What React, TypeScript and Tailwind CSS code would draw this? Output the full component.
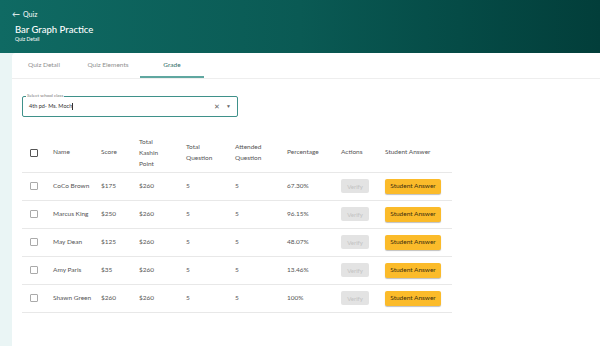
import { useState } from 'react';

interface Row {
  name: string;
  score: string;
  total: string;
  questions: number;
  attended: number;
  percentage: string;
}

const rows: Row[] = [
  { name: 'CoCo Brown', score: '$175', total: '$260', questions: 5, attended: 5, percentage: '67.30%' },
  { name: 'Marcus King', score: '$250', total: '$260', questions: 5, attended: 5, percentage: '96.15%' },
  { name: 'May Dean', score: '$125', total: '$260', questions: 5, attended: 5, percentage: '48.07%' },
  { name: 'Amy Paris', score: '$35', total: '$260', questions: 5, attended: 5, percentage: '13.46%' },
  { name: 'Shawn Green', score: '$260', total: '$260', questions: 5, attended: 5, percentage: '100%' },
];

const tabs = ['Quiz Detail', 'Quiz Elements', 'Grade'];

function Box({ dark }: { dark?: boolean }) {
  return (
    <span
      className={`inline-block align-middle w-[8px] h-[8px] rounded-[1px] border ${dark ? 'border-[#555]' : 'border-[#aaa]'}`}
    />
  );
}

export default function App() {
  const [tab, setTab] = useState('Grade');

  return (
    <div className="w-[600px] h-[346px] overflow-hidden bg-[#eaf5f5] font-['Lato',sans-serif] flex flex-col">
      <div className="h-[53px] shrink-0 bg-gradient-to-r from-[#0f6a63] via-[#0a5a54] to-[#023e3a] text-white pl-[12px] pt-[10px]">
        <div className="flex items-center gap-[3px] text-[7px] leading-[9px]">
          <span className="text-[8px]">←</span>
          <span>Quiz</span>
        </div>
        <div className="pl-[3px] mt-[5px] text-[9.5px] leading-[12px] font-medium">Bar Graph Practice</div>
        <div className="pl-[3px] text-[5px] leading-[7px]">Quiz Detail</div>
      </div>

      <div className="flex-1 ml-[12px] bg-white rounded-tl-[4px]">
        <div className="h-[26px] flex items-stretch border-b border-[#eeeeee] text-[6.5px] text-[#8f8f8f]">
          {tabs.map((t) => (
            <button
              key={t}
              onClick={() => setTab(t)}
              className={`w-[64px] flex items-center justify-center border-b-[2px] ${
                tab === t ? 'border-[#5fa7a0] text-[#2f6e68]' : 'border-transparent'
              }`}
            >
              {t}
            </button>
          ))}
        </div>

        <div className="pl-[10px] pt-[17px]">
          <div className="relative w-[216px] h-[21px] border border-[#3f918a] rounded-[2px] flex items-center pl-[6px] pr-[6px] text-[5.5px] text-[#333]">
            <span className="absolute -top-[4px] left-[3px] bg-white px-[1px] text-[4.5px] leading-[6px] text-[#777]">
              Select school class
            </span>
            <span className="flex-1">
              4th pd- Ms. Moch<span className="inline-block w-[0.5px] h-[7px] bg-[#333] align-middle" />
            </span>
            <span className="text-[7px] text-[#666] mr-[6px]">✕</span>
            <span className="text-[5px] text-[#666]">▼</span>
          </div>
        </div>

        <table className="ml-[10px] mt-[17px] w-[430px] table-fixed border-collapse text-[6.5px] text-[#555]">
          <colgroup>
            <col className="w-[31px]" />
            <col className="w-[48px]" />
            <col className="w-[38px]" />
            <col className="w-[47px]" />
            <col className="w-[49px]" />
            <col className="w-[52px]" />
            <col className="w-[54px]" />
            <col className="w-[44px]" />
            <col className="w-[67px]" />
          </colgroup>
          <thead>
            <tr className="h-[38px] border-b border-[#e8e8e8] text-left font-normal">
              <th className="pl-[8px] pb-[1px] font-normal">
                <Box dark />
              </th>
              <th className="font-normal pb-[1px]">Name</th>
              <th className="font-normal pb-[1px]">Score</th>
              <th className="font-normal leading-[11px] pb-[1px]">
                Total
                <br />
                Kashin
                <br />
                Point
              </th>
              <th className="font-normal leading-[11px] pb-[1px]">
                Total
                <br />
                Question
              </th>
              <th className="font-normal leading-[11px] pb-[1px]">
                Attended
                <br />
                Question
              </th>
              <th className="font-normal pb-[1px]">Percentage</th>
              <th className="font-normal pb-[1px]">Actions</th>
              <th className="font-normal pb-[1px]">Student Answer</th>
            </tr>
          </thead>
          <tbody>
            {rows.map((r) => (
              <tr key={r.name} className="h-[28px] border-b border-[#e8e8e8]">
                <td className="pl-[8px]">
                  <Box />
                </td>
                <td>{r.name}</td>
                <td>{r.score}</td>
                <td>{r.total}</td>
                <td>{r.questions}</td>
                <td>{r.attended}</td>
                <td>{r.percentage}</td>
                <td>
                  <span className="inline-flex items-center justify-center w-[28px] h-[14px] rounded-[2px] bg-[#e3e3e3] text-[#c2c2c2] text-[6px]">
                    Verify
                  </span>
                </td>
                <td>
                  <span className="inline-flex items-center justify-center w-[56px] h-[15px] rounded-[2px] bg-[#fbbb2a] text-[#3d3010] text-[6.5px] shadow-[0_1px_1px_rgba(0,0,0,0.25)]">
                    Student Answer
                  </span>
                </td>
              </tr>
            ))}
          </tbody>
        </table>
      </div>
    </div>
  );
}
